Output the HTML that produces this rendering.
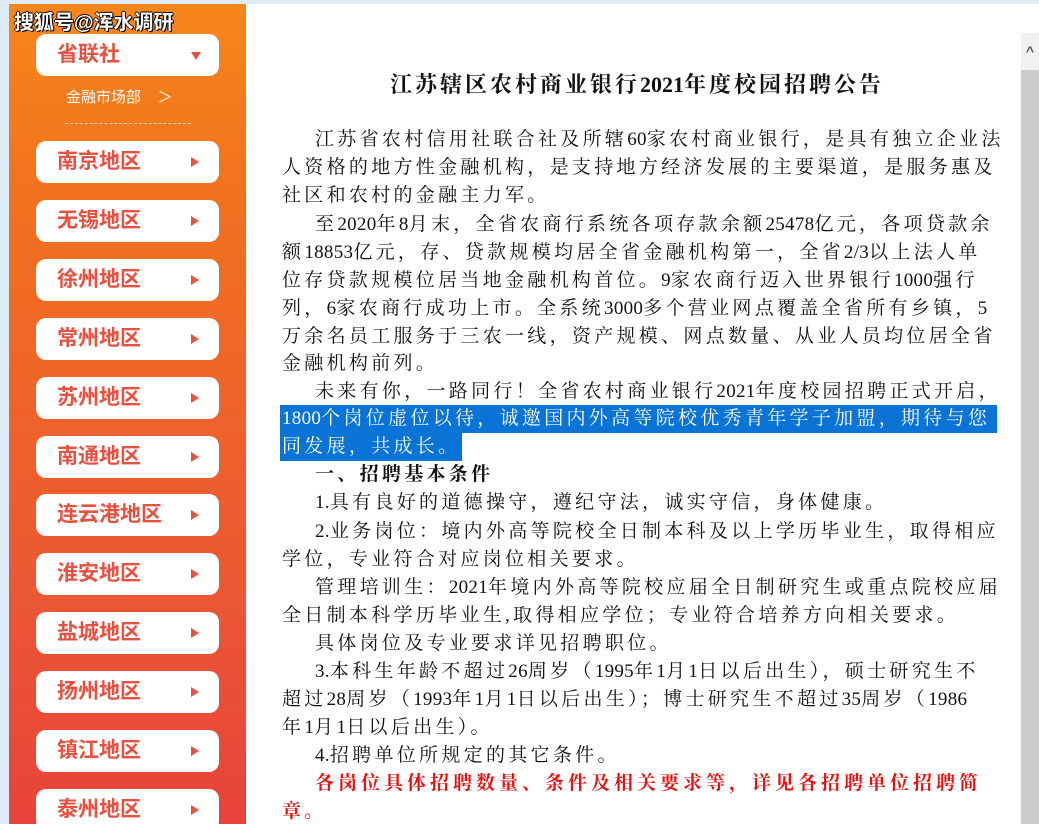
<!DOCTYPE html>
<html><head><meta charset="utf-8"><style>
*{margin:0;padding:0;box-sizing:border-box}
body{width:1039px;height:824px;overflow:hidden;background:#fff;position:relative;font-family:"Liberation Serif","Noto Serif CJK SC",serif}
.strip{position:absolute;left:0;top:0;width:1039px;height:4px;background:#dcedf8}
.lstrip{position:absolute;left:0;top:0;width:9px;height:824px;background:#dcedf8}
.side{position:absolute;left:9px;top:4px;width:237px;height:820px;background:linear-gradient(#f7861a,#f27020 25%,#eb5535 75%,#e8423b)}
.logo{position:absolute;left:14px;top:6px;color:#fff;font:bold 20px "Liberation Sans","Noto Sans CJK SC",sans-serif;text-shadow:1px 1px 0 #000,-1px 0 0 #000,0 -1px 0 #000,1px 0 0 #000;white-space:nowrap}
.btn{position:absolute;left:36px;width:183px;height:42px;background:#fff;border-radius:10px;color:#e8503f;font:bold 21px "Liberation Sans","Noto Sans CJK SC",sans-serif;line-height:42px;padding-left:21px}
.btn:after{content:"";position:absolute;right:20px;top:16px;border-left:8px solid #e8503f;border-top:5px solid transparent;border-bottom:5px solid transparent}
.btn.d:after{right:18px;top:18px;border-top:8px solid #e8503f;border-left:5px solid transparent;border-right:5px solid transparent;border-bottom:0}
.sub{position:absolute;left:66px;top:86px;color:#fff;font:15px "Liberation Sans","Noto Sans CJK SC",sans-serif;white-space:nowrap}
.dash{position:absolute;left:65px;top:123px;width:126px;border-top:1px dashed #fde0c8}
.scroll{position:absolute;left:1021px;top:33px;width:18px;height:791px;background:#cdcdcd}
.sup{position:absolute;left:1021px;top:33px;width:18px;height:37px;background:#f1f1f1;color:#555;font:bold 14px "Liberation Sans",sans-serif;text-align:center;line-height:37px}
.l{position:absolute;height:28px;line-height:28px;font-size:19px;letter-spacing:3.3px;white-space:nowrap;color:#111}
.l i{font-style:normal;letter-spacing:0.3px}
.t{position:absolute;left:390px;top:68px;font-size:22px;font-weight:bold;letter-spacing:3px;white-space:nowrap;color:#111}
.t i{font-style:normal;letter-spacing:0}
.hl{background:#0a74d6;color:#fff}
.r{color:#e8100f;font-weight:bold}
.b{font-weight:bold}
</style></head><body>
<div class="strip"></div><div class="lstrip"></div>
<div class="side"></div>
<div class="logo">搜狐号@浑水调研</div>
<div class="btn d" style="top:34px">省联社</div>
<div class="sub">金融市场部 &nbsp;&nbsp;&nbsp;＞</div>
<div class="dash"></div>
<div class="btn" style="top:141px">南京地区</div>
<div class="btn" style="top:200px">无锡地区</div>
<div class="btn" style="top:259px">徐州地区</div>
<div class="btn" style="top:318px">常州地区</div>
<div class="btn" style="top:377px">苏州地区</div>
<div class="btn" style="top:436px">南通地区</div>
<div class="btn" style="top:494px">连云港地区</div>
<div class="btn" style="top:553px">淮安地区</div>
<div class="btn" style="top:612px">盐城地区</div>
<div class="btn" style="top:671px">扬州地区</div>
<div class="btn" style="top:730px">镇江地区</div>
<div class="btn" style="top:789px">泰州地区</div>
<div class="scroll"></div><div class="sup">^</div>

<div class="t">江苏辖区农村商业银行<i>2021</i>年度校园招聘公告</div>
<div class="l" style="left:315px;top:126px">江苏省农村信用社联合社及所辖<i>60</i>家农村商业银行，是具有独立企业法</div>
<div class="l" style="left:282px;top:154px">人资格的地方性金融机构，是支持地方经济发展的主要渠道，是服务惠及</div>
<div class="l" style="left:282px;top:182px">社区和农村的金融主力军。</div>
<div class="l" style="left:315px;top:211px">至<i>2020</i>年<i>8</i>月末，全省农商行系统各项存款余额<i>25478</i>亿元，各项贷款余</div>
<div class="l" style="left:282px;top:239px">额<i>18853</i>亿元，存、贷款规模均居全省金融机构第一，全省<i>2/3</i>以上法人单</div>
<div class="l" style="left:282px;top:267px">位存贷款规模位居当地金融机构首位。<i>9</i>家农商行迈入世界银行<i>1000</i>强行</div>
<div class="l" style="left:282px;top:295px">列，<i>6</i>家农商行成功上市。全系统<i>3000</i>多个营业网点覆盖全省所有乡镇，<i>5</i></div>
<div class="l" style="left:282px;top:323px">万余名员工服务于三农一线，资产规模、网点数量、从业人员均位居全省</div>
<div class="l" style="left:282px;top:350px">金融机构前列。</div>
<div class="l" style="left:315px;top:378px">未来有你，一路同行！全省农村商业银行<i>2021</i>年度校园招聘正式开启，</div>
<div class="l hl" style="left:280px;top:405px;width:717px;padding-left:2px"><i>1800</i>个岗位虚位以待，诚邀国内外高等院校优秀青年学子加盟，期待与您</div>
<div class="l hl" style="left:280px;top:433px;width:182px;padding-left:2px">同发展，共成长。</div>
<div class="l b" style="left:315px;top:461px">一、招聘基本条件</div>
<div class="l" style="left:315px;top:489px"><i>1.</i>具有良好的道德操守，遵纪守法，诚实守信，身体健康。</div>
<div class="l" style="left:315px;top:518px"><i>2.</i>业务岗位：境内外高等院校全日制本科及以上学历毕业生，取得相应</div>
<div class="l" style="left:282px;top:546px">学位，专业符合对应岗位相关要求。</div>
<div class="l" style="left:315px;top:574px">管理培训生：<i>2021</i>年境内外高等院校应届全日制研究生或重点院校应届</div>
<div class="l" style="left:282px;top:602px">全日制本科学历毕业生,取得相应学位；专业符合培养方向相关要求。</div>
<div class="l" style="left:315px;top:630px">具体岗位及专业要求详见招聘职位。</div>
<div class="l" style="left:315px;top:658px"><i>3.</i>本科生年龄不超过<i>26</i>周岁（<i>1995</i>年<i>1</i>月<i>1</i>日以后出生），硕士研究生不</div>
<div class="l" style="left:282px;top:686px">超过<i>28</i>周岁（<i>1993</i>年<i>1</i>月<i>1</i>日以后出生）；博士研究生不超过<i>35</i>周岁（<i>1986</i></div>
<div class="l" style="left:282px;top:714px">年<i>1</i>月<i>1</i>日以后出生）。</div>
<div class="l" style="left:315px;top:742px"><i>4.</i>招聘单位所规定的其它条件。</div>
<div class="l r" style="left:315px;top:770px;letter-spacing:4px">各岗位具体招聘数量、条件及相关要求等，详见各招聘单位招聘简</div>
<div class="l r" style="left:282px;top:798px">章。</div>
</body></html>
